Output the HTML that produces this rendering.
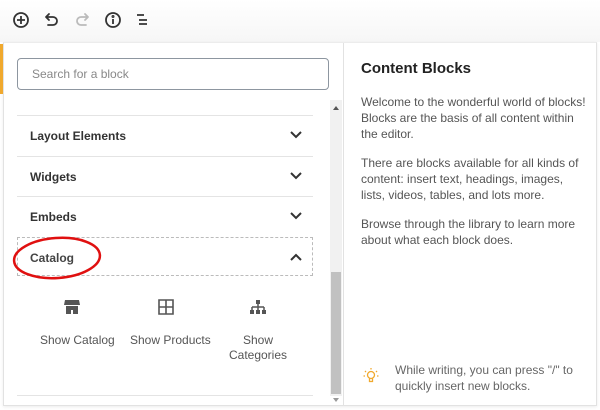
<!DOCTYPE html>
<html><head><style>
body{margin:0;width:600px;height:410px;background:#fff;font-family:"Liberation Sans",sans-serif;color:#333;position:relative;overflow:hidden}
.a{position:absolute}
.t{font-size:12px;color:#555}
.row{position:absolute;left:17px;width:296px;height:40px;border-top:1px solid #e4e4e4}
.row span{position:absolute;left:13px;top:13px;font-size:12px;font-weight:bold;color:#333}
.row svg{position:absolute;right:10px;top:14px}
p{margin:0}
</style></head><body>
<div class="a" style="left:0;top:0;width:600px;height:42px;background:linear-gradient(#fff,#f6f6f6)"></div>
<svg class="a" style="left:11px;top:9px" width="140" height="22" viewBox="0 0 140 22">
<g fill="none" stroke="#333" stroke-width="1.8">
<circle cx="10" cy="11" r="7"/><path d="M10 7v8M6 11h8"/>
<path d="M35 8h7a4 4 0 0 1 0 8h-5M35 8l3-3M35 8l3 3" stroke-linecap="round"/>
<path d="M77 8h-7a4 4 0 0 0 0 8h5M77 8l-3-3M77 8l-3 3" stroke="#bbb" stroke-linecap="round"/>
<circle cx="102" cy="11" r="7"/><path d="M102 10v5"/><circle cx="102" cy="7.5" r="0.6"/>
<path d="M126 6h7M128 11h8M128 15h8"/>
</g></svg>
<div class="a" style="left:3px;top:42px;width:594px;height:364px;border:1px solid #e2e2e2;box-sizing:border-box;border-top:1px solid #ececec;box-shadow:0 1px 3px rgba(0,0,0,.08)"></div>
<div class="a" style="left:0;top:44px;width:3px;height:50px;background:#f0a92e"></div>
<div class="a" style="left:343px;top:43px;width:1px;height:362px;background:#e2e2e2"></div>
<div class="a" style="left:17px;top:58px;width:312px;height:32px;border:1px solid #8d96a0;border-radius:4px;box-sizing:border-box"></div>
<div class="a t" style="left:32px;top:67px;color:#888">Search for a block</div>
<div class="a" style="left:330px;top:100px;width:12px;height:296px;background:#f1f1f1"></div>
<div class="a" style="left:331px;top:272px;width:10px;height:122px;background:#c1c1c1"></div>
<div class="a" style="left:333px;top:106px;border:3px solid transparent;border-bottom:4px solid #555;border-top:0"></div>
<div class="a" style="left:333px;top:398px;border:3px solid transparent;border-top:4px solid #999;border-bottom:0"></div>
<div class="row" style="top:115px"><span>Layout Elements</span><svg width="14" height="10"><path d="M2 2l5 5 5-5" fill="none" stroke="#333" stroke-width="2"/></svg></div>
<div class="row" style="top:156px"><span>Widgets</span><svg width="14" height="10"><path d="M2 2l5 5 5-5" fill="none" stroke="#333" stroke-width="2"/></svg></div>
<div class="row" style="top:196px"><span>Embeds</span><svg width="14" height="10"><path d="M2 2l5 5 5-5" fill="none" stroke="#333" stroke-width="2"/></svg></div>
<div class="a" style="left:17px;top:237px;width:296px;height:39px;border:1px dashed #bbb;box-sizing:border-box"></div>
<div class="a" style="left:30px;top:251px;font-size:12px;font-weight:bold;color:#444">Catalog</div>
<svg class="a" style="left:289px;top:253px" width="14" height="10"><path d="M2 7l5-5 5 5" fill="none" stroke="#333" stroke-width="2"/></svg>
<svg class="a" style="left:10px;top:233px" width="94" height="50"><ellipse cx="47" cy="25" rx="43" ry="20" fill="none" stroke="#e01010" stroke-width="2.5" transform="rotate(-4 47 25)"/></svg>
<svg class="a" style="left:64px;top:299px" width="16" height="16"><path d="M1 1h14l1 5H0z" fill="#555"/><path d="M2 7h12v8H9v-4H7v4H2z" fill="#555"/></svg>
<svg class="a" style="left:158px;top:299px" width="16" height="16"><path d="M1 1h14v14H1zM8 1v14M1 8h14" fill="none" stroke="#555" stroke-width="1.6"/></svg>
<svg class="a" style="left:250px;top:299px" width="16" height="16"><rect x="6" y="1" width="4" height="4" fill="#555"/><path d="M8 5v3M2 8h12M2 8v3M8 8v3M14 8v3" stroke="#555" stroke-width="1.5" fill="none"/><rect x="0" y="11" width="4" height="4" fill="#555"/><rect x="6" y="11" width="4" height="4" fill="#555"/><rect x="12" y="11" width="4" height="4" fill="#555"/></svg>
<div class="a t" style="left:40px;top:333px">Show Catalog</div>
<div class="a t" style="left:130px;top:333px">Show Products</div>
<div class="a t" style="left:218px;top:333px;width:80px;text-align:center;line-height:15px">Show<br>Categories</div>
<div class="a" style="left:17px;top:395px;width:296px;height:1px;background:#e4e4e4"></div>
<div class="a" style="left:361px;top:60px;font-size:15px;font-weight:bold;color:#222">Content Blocks</div>
<div class="a t" style="left:361px;top:94px;width:228px;line-height:16px;color:#555">
<p>Welcome to the wonderful world of blocks! Blocks are the basis of all content within the editor.</p>
<p style="margin-top:13px">There are blocks available for all kinds of content: insert text, headings, images,<br>lists, videos, tables, and lots more.</p>
<p style="margin-top:13px">Browse through the library to learn more about what each block does.</p></div>
<svg class="a" style="left:361px;top:366px" width="20" height="20"><g fill="none" stroke="#f0a92e" stroke-width="1.3"><circle cx="10" cy="9" r="3.5"/><path d="M8.5 12.5v3h3v-3M10 2v1.5M4 5l1 1M16 5l-1 1M2.5 10h1.5M16 10h1.5"/></g></svg>
<div class="a t" style="left:395px;top:362px;line-height:16px;color:#666">While writing, you can press "/" to<br>quickly insert new blocks.</div>
</body></html>
